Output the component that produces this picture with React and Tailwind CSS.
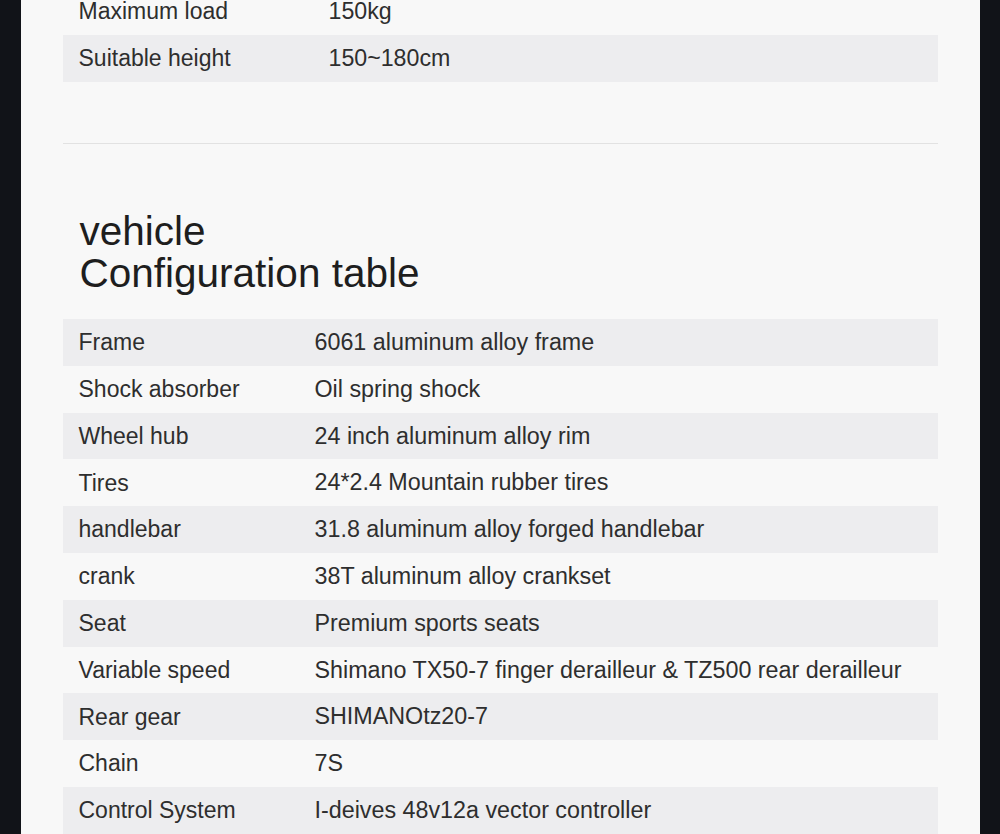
export default function App() {
  const top = [
    ["Maximum load", "150kg"],
    ["Suitable height", "150~180cm"],
  ];
  const config = [
    ["Frame", "6061 aluminum alloy frame"],
    ["Shock absorber", "Oil spring shock"],
    ["Wheel hub", "24 inch aluminum alloy rim"],
    ["Tires", "24*2.4 Mountain rubber tires"],
    ["handlebar", "31.8 aluminum alloy forged handlebar"],
    ["crank", "38T aluminum alloy crankset"],
    ["Seat", "Premium sports seats"],
    ["Variable speed", "Shimano TX50-7 finger derailleur & TZ500 rear derailleur"],
    ["Rear gear", "SHIMANOtz20-7"],
    ["Chain", "7S"],
    ["Control System", "I-deives 48v12a vector controller"],
  ];
  return (
    <div
      className="w-[1000px] h-[834px] overflow-hidden bg-[#111318] flex justify-center"
      style={{ fontFamily: '"Liberation Sans", Arial, sans-serif' }}
    >
      <div className="w-[959px] h-full bg-[#f8f8f8] px-[42px] text-[#2e2e2e]">
        <div className="-mt-[12px]">
          {top.map(([k, v], i) => (
            <div
              key={k}
              className={`grid grid-cols-[250px_1fr] items-center h-[47px] pl-4 text-[23px] ${
                i % 2 === 1 ? "bg-[#ededef]" : ""
              }`}
            >
              <span>{k}</span>
              <span className="text-[23.2px]">{v}</span>
            </div>
          ))}
        </div>
        <div className="mt-[61px] h-px bg-[#e2e2e2]" />
        <h2 className="mt-[66px] pl-[17px] text-[40.5px] leading-[42px] font-light text-[#1e1e1e]">
          vehicle
          <br />
          Configuration table
        </h2>
        <div className="mt-[25px]">
          {config.map(([k, v], i) => (
            <div
              key={k}
              className={`grid grid-cols-[236px_1fr] items-center h-[46.8px] pl-4 text-[23px] ${
                i % 2 === 0 ? "bg-[#ededef]" : ""
              }`}
            >
              <span>{k}</span>
              <span className="text-[23.3px]">{v}</span>
            </div>
          ))}
        </div>
      </div>
    </div>
  );
}
